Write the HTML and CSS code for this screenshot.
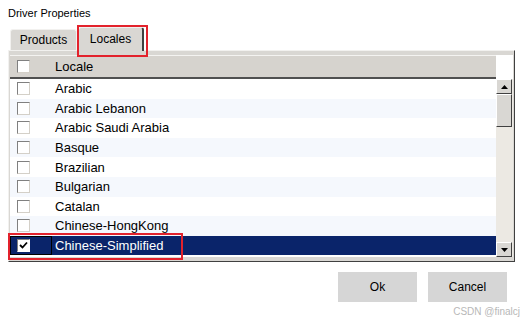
FILE: index.html
```html
<!DOCTYPE html>
<html lang="en">
<head>
    <meta charset="UTF-8">
    <title>Driver Properties</title>
    <link rel="stylesheet" href="styles.css">
</head>
<body>
    <div class="window">
        <div class="title">Driver Properties</div>
        <div class="tabs">
            <div class="tab">Products</div>
            <div class="tab tab-active">Locales<span class="mark mark-tab"></span></div>
        </div>
        <div class="page">
            <div class="grid">
                <div class="grid-head">
                    <div class="head-cells">
                        <div class="cell-check"><span class="box"></span></div>
                        <div class="cell-name">Locale</div>
                    </div>
                    <div class="head-filler"></div>
                </div>
                <div class="grid-body">
                    <div class="rows">
                        <div class="row"><div class="cell-check"><span class="box"></span></div><div class="cell-name">Arabic</div></div>
                        <div class="row alt"><div class="cell-check"><span class="box"></span></div><div class="cell-name">Arabic Lebanon</div></div>
                        <div class="row"><div class="cell-check"><span class="box"></span></div><div class="cell-name">Arabic Saudi Arabia</div></div>
                        <div class="row alt"><div class="cell-check"><span class="box"></span></div><div class="cell-name">Basque</div></div>
                        <div class="row"><div class="cell-check"><span class="box"></span></div><div class="cell-name">Brazilian</div></div>
                        <div class="row alt"><div class="cell-check"><span class="box"></span></div><div class="cell-name">Bulgarian</div></div>
                        <div class="row"><div class="cell-check"><span class="box"></span></div><div class="cell-name">Catalan</div></div>
                        <div class="row alt"><div class="cell-check"><span class="box"></span></div><div class="cell-name">Chinese-HongKong</div></div>
                        <div class="row selected">
                            <div class="cell-check focus">
                                <span class="box checked">
                                    <svg width="9" height="9" viewBox="0 0 9 9"><path d="M1 4 L3.5 6.5 L8 1.5" fill="none" stroke="#000" stroke-width="1.8"/></svg>
                                </span>
                            </div>
                            <div class="cell-name">Chinese-Simplified</div>
                            <span class="mark mark-row"></span>
                        </div>
                    </div>
                    <div class="scrollbar">
                        <div class="sb-btn"><svg width="7" height="4" viewBox="0 0 7 4"><path d="M3.5 0 L7 4 L0 4 Z" fill="#000"/></svg></div>
                        <div class="sb-thumb"></div>
                        <div class="sb-track"></div>
                        <div class="sb-btn"><svg width="7" height="4" viewBox="0 0 7 4"><path d="M0 0 L7 0 L3.5 4 Z" fill="#000"/></svg></div>
                    </div>
                </div>
            </div>
        </div>
        <div class="buttons">
            <div class="btn">Ok</div>
            <div class="btn">Cancel</div>
        </div>
        <div class="watermark">CSDN @finalcj</div>
    </div>
</body>
</html>
```
FILE: styles.css
```css
body {
    margin: 0;
    background: #ffffff;
    font-family: "Liberation Sans", Arial, sans-serif;
    color: #000;
}

.window {
    width: 522px;
    height: 320px;
    padding: 0 7px 0 8px;
    box-sizing: border-box;
    position: relative;
}

.title {
    height: 27px;
    padding-top: 7px;
    box-sizing: border-box;
    font-size: 11px;
}

.tabs {
    display: flex;
    align-items: flex-end;
    height: 23px;
    padding-left: 2px;
}

.tab {
    width: 67px;
    height: 21px;
    box-sizing: border-box;
    background: #d9d7d3;
    border: 1px solid #f2f1ef;
    border-bottom: none;
    border-radius: 3px 3px 0 0;
    font-size: 12px;
    text-align: center;
    line-height: 20px;
}

.tab-active {
    position: relative;
    width: 66px;
    height: 24px;
    margin-bottom: -1px;
    margin-left: 1px;
    border-right: 2px solid #404040;
    line-height: 22px;
    z-index: 1;
}

.mark {
    position: absolute;
    border: 2px solid #e3222c;
    pointer-events: none;
}

.mark-tab {
    left: -2px;
    top: -3px;
    width: 67px;
    height: 28px;
}

.mark-row {
    left: -2px;
    top: -3px;
    width: 171px;
    height: 23px;
}

.page {
    height: 212px;
    box-sizing: border-box;
    background: #d9d7d3;
    border-top: 1px solid #f2f1ef;
    border-left: 1px solid #f2f1ef;
    border-right: 1px solid #404040;
    border-bottom: 1px solid #404040;
    padding: 4px 1px 2px 1px;
}

.grid {
    height: 100%;
    display: flex;
    flex-direction: column;
    border-bottom: 2px solid #d9d7d3;
    box-sizing: border-box;
}

.grid-head {
    display: flex;
    height: 24px;
    flex: 0 0 auto;
}

.head-cells {
    flex: 1;
    display: flex;
    background: #d6d3ce;
    border-top: 1px solid #f4f3f1;
    border-bottom: 2px solid #505050;
    box-sizing: border-box;
}

.head-cells .cell-name {
    font-size: 13px;
}

.head-filler {
    width: 17px;
    background: #ffffff;
}

.grid-body {
    flex: 1;
    display: flex;
    min-height: 0;
}

.rows {
    flex: 1;
    display: flex;
    flex-direction: column;
    background: #ffffff;
}

.row {
    position: relative;
    display: flex;
    height: 19.6px;
    flex: 0 0 auto;
    background: #ffffff;
}

.row.alt {
    background: #f5f8fd;
}

.row.selected {
    background: #0a246a;
    color: #ffffff;
}

.cell-check {
    width: 42px;
    flex: 0 0 auto;
    display: flex;
    align-items: center;
    padding-left: 7px;
    box-sizing: border-box;
}

.cell-check.focus {
    border: 1px solid #000000;
    padding-left: 6px;
}

.cell-name {
    flex: 1;
    display: flex;
    align-items: center;
    padding-left: 3px;
    font-size: 13px;
}

.box {
    width: 13px;
    height: 13px;
    box-sizing: border-box;
    background: #ffffff;
    border: 1px solid;
    border-color: #808080 #d4d0c8 #d4d0c8 #808080;
    display: flex;
    align-items: center;
    justify-content: center;
}

.box.checked {
    border-color: #808080 #ffffff #ffffff #808080;
}

.scrollbar {
    width: 17px;
    display: flex;
    flex-direction: column;
    background: #ece9e3;
}

.sb-btn {
    height: 15px;
    width: 16px;
    box-sizing: border-box;
    background: #d9d7d3;
    border: 1px solid;
    border-color: #ffffff #404040 #404040 #ffffff;
    display: flex;
    align-items: center;
    justify-content: center;
}

.sb-thumb {
    height: 33px;
    width: 16px;
    box-sizing: border-box;
    background: #d9d7d3;
    border: 1px solid;
    border-color: #ffffff #404040 #404040 #ffffff;
}

.sb-track {
    flex: 1;
}

.buttons {
    display: flex;
    justify-content: flex-end;
    gap: 11px;
    padding: 10px 8px 0 0;
}

.btn {
    width: 79px;
    height: 30px;
    background: #d6d6d6;
    font-size: 12px;
    text-align: center;
    line-height: 30px;
}

.watermark {
    position: absolute;
    right: 2px;
    bottom: 3px;
    font-size: 10px;
    color: #b8b8b8;
}
```
